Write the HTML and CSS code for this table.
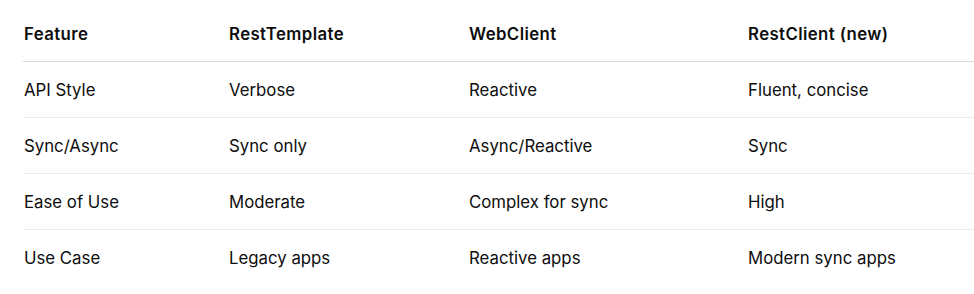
FILE: index.html
```html
<!DOCTYPE html>
<html lang="en">
<head>
    <meta charset="UTF-8">
    <title>Client Comparison</title>
    <link rel="stylesheet" href="styles.css">
</head>
<body>

<table class="compare-table">
    <thead>
        <tr>
            <th class="col-feature">Feature</th>
            <th class="col-rest">RestTemplate</th>
            <th class="col-web">WebClient</th>
            <th class="col-new">RestClient (new)</th>
        </tr>
    </thead>
    <tbody>
        <tr>
            <td>API Style</td>
            <td>Verbose</td>
            <td>Reactive</td>
            <td>Fluent, concise</td>
        </tr>
        <tr>
            <td>Sync/Async</td>
            <td>Sync only</td>
            <td>Async/Reactive</td>
            <td>Sync</td>
        </tr>
        <tr>
            <td>Ease of Use</td>
            <td>Moderate</td>
            <td>Complex for sync</td>
            <td>High</td>
        </tr>
        <tr>
            <td>Use Case</td>
            <td>Legacy apps</td>
            <td>Reactive apps</td>
            <td>Modern sync apps</td>
        </tr>
    </tbody>
</table>

</body>
</html>
```

FILE: styles.css
```css
body {
    font-family: Inter, "Noto Sans", sans-serif;
    background-color: #ffffff;
    color: #0d0d0d;
    margin: 0;
    padding: 6px 0 0 23px;
}

.compare-table {
    width: 951px;
    border-collapse: collapse;
    table-layout: fixed;
    font-size: 16.8px;
}

.compare-table th,
.compare-table td {
    text-align: left;
    padding: 0 0 0 1px;
    height: 55px;
    vertical-align: middle;
}

.compare-table th {
    font-weight: 600;
    letter-spacing: 0.4px;
    border-bottom: 1px solid #d9d9d9;
}

.compare-table td {
    font-weight: 400;
    border-bottom: 1px solid #ececec;
}

.compare-table tbody tr:last-child td {
    border-bottom: none;
}

/* widths plus 1px padding give 205 / 240 / 279 */
.col-feature { width: 204px; }
.col-rest { width: 239px; }
.col-web { width: 278px; }
.col-new { width: 226px; }
```
